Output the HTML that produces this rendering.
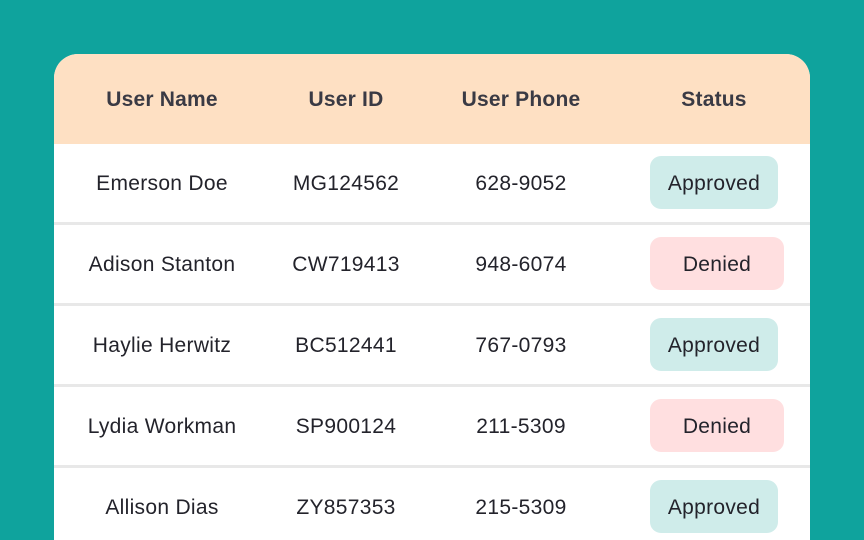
<!DOCTYPE html>
<html style="width:864px;height:540px;overflow:hidden"><head><style>
body{margin:0;width:864px;height:540px;background:#0fa39d;overflow:hidden;font-family:"Liberation Sans",sans-serif;position:relative;}
.card{position:absolute;left:54px;top:54px;width:756px;height:486px;background:#fff;border-radius:24px 24px 0 0;overflow:hidden;}
.hdr{height:90px;background:#fee0c3;position:relative;}
.row{height:78px;border-bottom:3px solid #e8e8e8;position:relative;}
.c{position:absolute;transform:translateX(-50%);white-space:nowrap;font-size:21px;color:#23232b;letter-spacing:0.3px;}
.hdr .c{top:34px;font-weight:bold;color:#3a3a44;letter-spacing:0.2px;}
.row .c{top:28px;}
.b{position:absolute;left:596px;top:12px;height:53px;border-radius:11px;font-size:21px;color:#23232b;line-height:55px;text-align:center;letter-spacing:0.3px;}
.ap{width:128px;background:#cfecea;}
.dn{width:134px;background:#ffdfe0;}
</style></head><body>
<div class="card">
<div class="hdr"><span class="c" style="left:108px">User Name</span><span class="c" style="left:292px">User ID</span><span class="c" style="left:467px">User Phone</span><span class="c" style="left:660px">Status</span></div>
<div class="row"><span class="c" style="left:108px">Emerson Doe</span><span class="c" style="left:292px">MG124562</span><span class="c" style="left:467px">628-9052</span><div class="b ap">Approved</div></div>
<div class="row"><span class="c" style="left:108px">Adison Stanton</span><span class="c" style="left:292px">CW719413</span><span class="c" style="left:467px">948-6074</span><div class="b dn">Denied</div></div>
<div class="row"><span class="c" style="left:108px">Haylie Herwitz</span><span class="c" style="left:292px">BC512441</span><span class="c" style="left:467px">767-0793</span><div class="b ap">Approved</div></div>
<div class="row"><span class="c" style="left:108px">Lydia Workman</span><span class="c" style="left:292px">SP900124</span><span class="c" style="left:467px">211-5309</span><div class="b dn">Denied</div></div>
<div class="row"><span class="c" style="left:108px">Allison Dias</span><span class="c" style="left:292px">ZY857353</span><span class="c" style="left:467px">215-5309</span><div class="b ap">Approved</div></div>
</div>
</body></html>
